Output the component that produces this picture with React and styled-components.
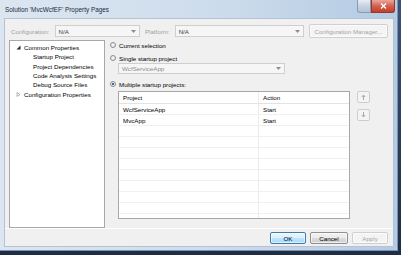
import React from 'react';
import styled, { createGlobalStyle } from 'styled-components';

const GlobalStyle = createGlobalStyle`
  html, body {
    margin: 0;
    padding: 0;
    width: 401px;
    height: 255px;
    overflow: hidden;
    background: linear-gradient(to bottom, #3c5275, #1f2c45);
  }
  * { box-sizing: border-box; }
`;

const Window = styled.div`
  width: 398px;
  height: 251px;
  padding: 0 3px 3px 4px;
  display: flex;
  flex-direction: column;
  background: linear-gradient(to right, #dbe6f1, #cddcec 55%, #b3cbe3);
  border-right: 1px solid #7d92ad;
  border-bottom: 1px solid #7d92ad;
  font-family: "Liberation Sans", Arial, sans-serif;
  font-size: 6.2px;
  color: #000;
`;

const TitleBar = styled.div`
  height: 18px;
  display: flex;
  align-items: flex-start;
  justify-content: space-between;
`;

const Title = styled.span`
  margin-top: 6px;
  margin-left: 1px;
  font-size: 6.4px;
  color: #1e2a3a;
`;

const Controls = styled.div`
  display: flex;
  margin-right: -1px;
`;

const CaptionButton = styled.div`
  height: 13px;
  width: ${p => (p.close ? '24px' : '14px')};
  display: flex;
  align-items: center;
  justify-content: center;
  border: 1px solid ${p => (p.close ? '#8b3a2e' : '#8a9bb0')};
  border-top: none;
  border-radius: ${p => (p.close ? '0 0 3px 0' : '0 0 0 3px')};
  background: ${p =>
    p.close
      ? 'linear-gradient(to bottom, #eba79d, #d4604e 50%, #c53d27)'
      : 'linear-gradient(to bottom, #e8eef5, #c5d2e0 50%, #b4c4d6)'};
`;

const Client = styled.div`
  flex: 1;
  display: flex;
  flex-direction: column;
  background: #f0f0f0;
  border: 1px solid #b3c3d5;
  padding: 5px 5px 0 4px;
`;

const TopRow = styled.div`
  height: 14px;
  display: flex;
  align-items: center;
  gap: 5px;
`;

const Label = styled.span`
  color: ${p => (p.disabled ? '#a0a0a0' : '#000')};
  margin-left: ${p => p.indent || 0}px;
  white-space: nowrap;
`;

const Combo = styled.div`
  width: ${p => p.width}px;
  height: ${p => p.height || 12}px;
  margin-left: ${p => p.indent || 0}px;
  display: flex;
  align-items: center;
  justify-content: space-between;
  padding: 0 3px;
  background: ${p => (p.disabled ? '#f6f6f6' : '#fff')};
  border: 1px solid #cfcfcf;
  color: ${p => (p.dim ? '#8d8d8d' : '#3c3c3c')};
`;

const Arrow = () => (
  <svg width="5" height="3" viewBox="0 0 5 3">
    <path d="M0 0h5L2.5 3z" fill="#8c8c8c" />
  </svg>
);

const PushButton = styled.div`
  width: ${p => p.width}px;
  height: ${p => p.height || 12}px;
  display: flex;
  align-items: center;
  justify-content: center;
  border: 1px solid ${p => (p.primary ? '#3d7bad' : p.disabled ? '#cfcfcf' : '#8e8f8f')};
  border-radius: 2px;
  color: ${p => (p.disabled ? '#a5a5a5' : '#000')};
  background: ${p =>
    p.primary
      ? 'linear-gradient(to bottom, #eaf6fd, #d9f0fc 50%, #bee6fd 51%, #a7d9f5)'
      : p.disabled
      ? '#f4f4f4'
      : 'linear-gradient(to bottom, #f2f2f2, #ebebeb 50%, #dddddd 51%, #cfcfcf)'};
  box-shadow: inset 0 0 0 1px rgba(255, 255, 255, 0.6);
`;

const Body = styled.div`
  display: flex;
  margin-top: 2px;
`;

const Tree = styled.div`
  width: 96px;
  height: 188px;
  background: #fff;
  border: 1px solid #a8a8a8;
  padding-top: 2px;
  display: flex;
  flex-direction: column;
`;

const TreeItem = styled.div`
  height: 9.3px;
  display: flex;
  align-items: center;
  padding-left: ${p => (p.child ? 23 : 6)}px;
  gap: 3px;
  white-space: nowrap;
`;

const Expander = ({ open }) => (
  <svg width="5" height="5" viewBox="0 0 5 5">
    {open ? (
      <path d="M4.5 0.5V4.5H0.5z" fill="#262626" />
    ) : (
      <path d="M1 0.5L4 2.5L1 4.5z" fill="none" stroke="#a0a0a0" strokeWidth="0.8" />
    )}
  </svg>
);

const Pane = styled.div`
  flex: 1;
  margin-left: 5px;
  display: flex;
  flex-direction: column;
`;

const RadioRow = styled.div`
  height: 10px;
  display: flex;
  align-items: center;
  gap: 3px;
  margin-top: ${p => p.gap || 0}px;
`;

const RadioDot = styled.span`
  width: 6px;
  height: 6px;
  border-radius: 50%;
  border: 1px solid #8e8f8f;
  background: ${p =>
    p.checked
      ? 'radial-gradient(circle, #2d4f80 0, #4b7bb9 1.2px, #eef 1.6px, #e6e6e6 100%)'
      : 'radial-gradient(circle, #fafafa, #dcdcdc)'};
`;

const TableArea = styled.div`
  display: flex;
  gap: 7px;
  margin-left: 8px;
  margin-top: 2px;
`;

const Table = styled.div`
  width: 232px;
  height: 128px;
  background: #fff;
  border: 1px solid #a8a8a8;
  display: flex;
  flex-direction: column;
  overflow: hidden;
`;

const Row = styled.div`
  height: ${p => (p.header ? 12 : 11)}px;
  flex-shrink: 0;
  display: grid;
  grid-template-columns: 140px 1fr;
  border-bottom: 1px solid ${p => (p.header ? '#e3e3e3' : '#f0f0f0')};
`;

const Cell = styled.div`
  display: flex;
  align-items: center;
  padding-left: 4px;
  border-right: 1px solid #ececec;
  &:last-child { border-right: none; }
`;

const SideButtons = styled.div`
  display: flex;
  flex-direction: column;
  gap: 6px;
`;

const SmallButton = styled.div`
  width: 13px;
  height: 12px;
  display: flex;
  align-items: center;
  justify-content: center;
  border: 1px solid #cdcdcd;
  border-radius: 2px;
  background: #f4f4f4;
`;

const UpDown = ({ down }) => (
  <svg width="5" height="6" viewBox="0 0 5 6">
    <path
      d={down ? 'M2.5 0v4.5M0.8 3l1.7 2 1.7-2' : 'M2.5 6V1.5M0.8 3l1.7-2 1.7 2'}
      fill="none"
      stroke="#a8a8a8"
      strokeWidth="1"
    />
  </svg>
);

const Separator = styled.div`
  height: 1px;
  background: #dfdfdf;
  border-bottom: 1px solid #fff;
  margin: 0 -5px 0 -4px;
`;

const Footer = styled.div`
  display: flex;
  justify-content: flex-end;
  gap: 4px;
  padding: 3px 0 0;
`;

const rows = [
  ['WcfServiceApp', 'Start'],
  ['MvcApp', 'Start'],
  ['', ''], ['', ''], ['', ''], ['', ''], ['', ''], ['', ''], ['', ''], ['', ''], ['', '']
];

export default function App() {
  return (
    <>
      <GlobalStyle />
      <Window>
        <TitleBar>
          <Title>Solution 'MvcWcfEF' Property Pages</Title>
          <Controls>
            <CaptionButton />
            <CaptionButton close>
              <svg width="7" height="6" viewBox="0 0 7 6">
                <path d="M1 0.5l5 5M6 0.5l-5 5" stroke="#fff" strokeWidth="1.4" />
              </svg>
            </CaptionButton>
          </Controls>
        </TitleBar>
        <Client>
          <TopRow>
            <Label disabled indent={2}>Configuration:</Label>
            <Combo width={86} disabled>N/A<Arrow /></Combo>
            <Label disabled>Platform:</Label>
            <Combo width={130} disabled>N/A<Arrow /></Combo>
            <PushButton width={80} height={14} disabled>Configuration Manager...</PushButton>
          </TopRow>
          <Body>
            <Tree>
              <TreeItem><Expander open />Common Properties</TreeItem>
              <TreeItem child>Startup Project</TreeItem>
              <TreeItem child>Project Dependencies</TreeItem>
              <TreeItem child>Code Analysis Settings</TreeItem>
              <TreeItem child>Debug Source Files</TreeItem>
              <TreeItem><Expander />Configuration Properties</TreeItem>
            </Tree>
            <Pane>
              <RadioRow><RadioDot />Current selection</RadioRow>
              <RadioRow gap={3}><RadioDot />Single startup project</RadioRow>
              <Combo width={167} height={11} indent={8} disabled dim>WcfServiceApp<Arrow /></Combo>
              <RadioRow gap={5}><RadioDot checked />Multiple startup projects:</RadioRow>
              <TableArea>
                <Table>
                  <Row header>
                    <Cell>Project</Cell>
                    <Cell>Action</Cell>
                  </Row>
                  {rows.map((r, i) => (
                    <Row key={i}>
                      <Cell>{r[0]}</Cell>
                      <Cell>{r[1]}</Cell>
                    </Row>
                  ))}
                </Table>
                <SideButtons>
                  <SmallButton><UpDown /></SmallButton>
                  <SmallButton><UpDown down /></SmallButton>
                </SideButtons>
              </TableArea>
            </Pane>
          </Body>
          <Separator />
          <Footer>
            <PushButton width={36} primary>OK</PushButton>
            <PushButton width={38}>Cancel</PushButton>
            <PushButton width={36} disabled>Apply</PushButton>
          </Footer>
        </Client>
      </Window>
    </>
  );
}
